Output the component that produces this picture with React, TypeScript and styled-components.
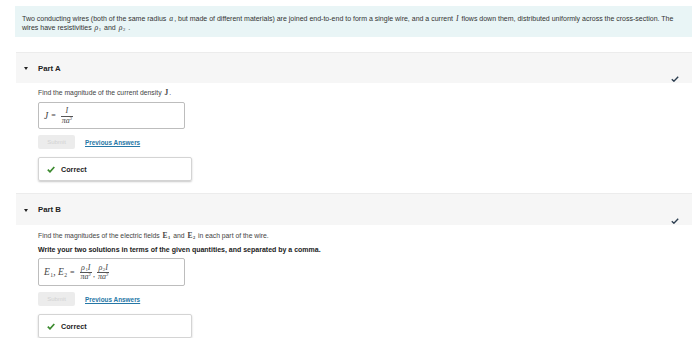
import styled, { createGlobalStyle } from "styled-components";

const GlobalStyle = createGlobalStyle`
  body {
    margin: 0;
    background: #ffffff;
  }
`;

const Page = styled.div`
  width: 700px;
  box-sizing: border-box;
  padding: 6px 8px 0 15px;
  font-family: "Liberation Sans", Arial, sans-serif;
  color: #333333;
`;

const Intro = styled.div`
  background: #e9f5f6;
  padding: 8px 10px 5px 7px;
  font-size: 7px;
  line-height: 9px;
`;

const M = styled.span<{ $bold?: boolean }>`
  font-family: "Liberation Serif", "Times New Roman", serif;
  font-style: ${({ $bold }) => ($bold ? "normal" : "italic")};
  font-weight: ${({ $bold }) => ($bold ? 700 : 400)};
  font-size: 1.1em;
  line-height: 1;
  margin: 0 1px;
`;

const Sub = styled.sub`
  font-size: 0.6em;
  font-style: normal;
  vertical-align: -0.3em;
  line-height: 0;
  margin-left: 0.5px;
`;

const Sup = styled.sup`
  font-size: 0.6em;
  font-style: normal;
  vertical-align: 0.6em;
  line-height: 0;
`;

const Section = styled.section`
  margin-top: 15px;
  margin-left: 1px;

  & + & {
    margin-top: 12px;
  }
`;

const Header = styled.div<{ $height: number }>`
  display: flex;
  align-items: center;
  height: ${({ $height }) => $height}px;
  background: #f6f6f6;
  border-top: 1px solid #ececec;
  padding-left: 8px;
  position: relative;
`;

const Caret = styled.span`
  width: 0;
  height: 0;
  border-left: 2.5px solid transparent;
  border-right: 2.5px solid transparent;
  border-top: 3.5px solid #222222;
  margin-right: 10px;
  margin-top: 1px;
`;

const PartTitle = styled.span`
  font-size: 7.8px;
  font-weight: 700;
  color: #222222;
`;

const DoneMark = styled.svg`
  position: absolute;
  right: 13px;
  bottom: 1px;
`;

const Body = styled.div<{ $top: number }>`
  padding: ${({ $top }) => $top}px 0 0 22px;
`;

const Prompt = styled.p<{ $bold?: boolean }>`
  margin: 0 0 ${({ $bold }) => ($bold ? 4 : 5)}px;
  font-size: ${({ $bold }) => ($bold ? 7 : 6.8)}px;
  line-height: 9px;
  font-weight: ${({ $bold }) => ($bold ? 700 : 400)};
  color: ${({ $bold }) => ($bold ? "#222222" : "#444444")};
`;

const AnswerBox = styled.div<{ $height: number }>`
  width: 147px;
  height: ${({ $height }) => $height}px;
  box-sizing: border-box;
  border: 1px solid #bdbdbd;
  border-radius: 2px;
  display: flex;
  align-items: center;
  padding-left: 5px;
  font-family: "Liberation Serif", "Times New Roman", serif;
  font-size: 9.5px;
  color: #444444;
`;

const Lhs = styled.span`
  font-style: italic;
  margin-right: 3px;
`;

const Eq = styled.span`
  margin-right: 5px;
  font-size: 8px;
`;

const Frac = styled.span`
  display: inline-flex;
  flex-direction: column;
  align-items: center;
  font-size: 8px;
  line-height: 8.5px;
  font-style: italic;
  margin-top: 1px;
`;

const Num = styled.span`
  padding: 0 1px;
`;

const Den = styled.span`
  border-top: 0.6px solid #555555;
  padding: 0 1px;
`;

const Comma = styled.span`
  margin: 4px 2px 0 1px;
  font-size: 8px;
`;

const Actions = styled.div`
  display: flex;
  align-items: center;
  margin-top: 6px;
  height: 14px;
`;

const SubmitButton = styled.button`
  width: 37px;
  height: 14px;
  border: none;
  border-radius: 2px;
  background: #ececec;
  color: #d2d2d2;
  font-family: "Liberation Sans", Arial, sans-serif;
  font-size: 6px;
  padding: 0;
`;

const PrevLink = styled.a`
  margin-left: 10px;
  font-size: 6.4px;
  font-weight: 700;
  color: #2677a6;
  text-decoration: underline;
`;

const Feedback = styled.div`
  margin-top: 8px;
  width: 154px;
  height: 24px;
  box-sizing: border-box;
  border: 1px solid #d4d4d4;
  border-radius: 2px;
  box-shadow: 0 1px 2px rgba(0, 0, 0, 0.22);
  display: flex;
  align-items: center;
  padding-left: 8px;
  gap: 6px;
  font-size: 7.2px;
  font-weight: 700;
  color: #222222;
`;

const TickSmall = () => (
  <DoneMark width="8" height="6" viewBox="0 0 8 6">
    <path d="M0.8 3.2 L2.9 5.2 L7.2 0.8" fill="none" stroke="#2c3e50" strokeWidth="1.4" />
  </DoneMark>
);

const GreenTick = () => (
  <svg width="8" height="7" viewBox="0 0 8 7">
    <path d="M0.8 3.6 L3 5.8 L7.3 1" fill="none" stroke="#3c8a2f" strokeWidth="1.7" />
  </svg>
);

interface PartProps {
  name: string;
  headerHeight: number;
  bodyTop: number;
  children: React.ReactNode;
}

const Part = ({ name, headerHeight, bodyTop, children }: PartProps) => (
  <Section>
    <Header $height={headerHeight}>
      <Caret />
      <PartTitle>{name}</PartTitle>
      <TickSmall />
    </Header>
    <Body $top={bodyTop}>
      {children}
      <Actions>
        <SubmitButton>Submit</SubmitButton>
        <PrevLink>Previous Answers</PrevLink>
      </Actions>
      <Feedback>
        <GreenTick />
        Correct
      </Feedback>
    </Body>
  </Section>
);

export default function App() {
  return (
    <>
      <GlobalStyle />
      <Page>
        <Intro>
          Two conducting wires (both of the same radius <M>a</M>, but made of different materials) are
          joined end-to-end to form a single wire, and a current <M>I</M> flows down them, distributed
          uniformly across the cross-section. The wires have resistivities{" "}
          <M>
            ρ<Sub>1</Sub>
          </M>{" "}
          and{" "}
          <M>
            ρ<Sub>2</Sub>
          </M>{" "}
          .
        </Intro>

        <Part name="Part A" headerHeight={30} bodyTop={5}>
          <Prompt>
            Find the magnitude of the current density <M $bold>J</M>.
          </Prompt>
          <AnswerBox $height={27}>
            <Lhs>J</Lhs>
            <Eq>=</Eq>
            <Frac>
              <Num>I</Num>
              <Den>
                πa<Sup>2</Sup>
              </Den>
            </Frac>
          </AnswerBox>
        </Part>

        <Part name="Part B" headerHeight={31} bodyTop={6}>
          <Prompt>
            Find the magnitudes of the electric fields{" "}
            <M $bold>
              E<Sub>1</Sub>
            </M>{" "}
            and{" "}
            <M $bold>
              E<Sub>2</Sub>
            </M>{" "}
            in each part of the wire.
          </Prompt>
          <Prompt $bold>Write your two solutions in terms of the given quantities, and separated by a comma.</Prompt>
          <AnswerBox $height={28}>
            <Lhs>
              E<Sub>1</Sub>, E<Sub>2</Sub>
            </Lhs>
            <Eq>=</Eq>
            <Frac>
              <Num>
                ρ<Sub>1</Sub>I
              </Num>
              <Den>
                πa<Sup>2</Sup>
              </Den>
            </Frac>
            <Comma>,</Comma>
            <Frac>
              <Num>
                ρ<Sub>2</Sub>I
              </Num>
              <Den>
                πa<Sup>2</Sup>
              </Den>
            </Frac>
          </AnswerBox>
        </Part>
      </Page>
    </>
  );
}
